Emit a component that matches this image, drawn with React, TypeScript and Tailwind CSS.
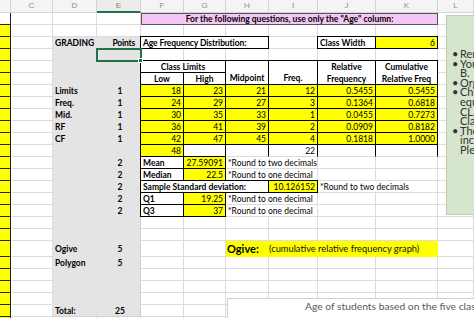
import React from "react";

const BK = "-ml-px -mt-px border border-black";
const LT = "border-r border-b border-[#dcdcdc]";

const HEAD = ["", "C", "D", "E", "F", "G", "H", "I", "J", "K", "L"];

const DATA = [
  ["18", "23", "21", "12", "0.5455", "0.5455"],
  ["24", "29", "27", "3", "0.1364", "0.6818"],
  ["30", "35", "33", "1", "0.0455", "0.7273"],
  ["36", "41", "39", "2", "0.0909", "0.8182"],
  ["42", "47", "45", "4", "0.1818", "1.0000"],
];

const GRAY: [string, string][] = [
  ["GRADING", "Points"],
  ["", "SEL"],
  ["", ""],
  ["", ""],
  ["Limits", "1"],
  ["Freq.", "1"],
  ["Mid.", "1"],
  ["RF", "1"],
  ["CF", "1"],
  ["", ""],
  ["", "2"],
  ["", "2"],
  ["", "2"],
  ["", "2"],
  ["", "2"],
  ["", ""],
  ["", ""],
  ["Ogive", "5"],
  ["Polygon", "5"],
  ["", ""],
  ["", ""],
  ["", ""],
  ["Total:", "25"],
];

const NOTES: [boolean, string][] = [
  [true, "Remember to label every graph."],
  [true, "You will use the data in column"],
  [false, "B."],
  [true, "Organize the data in a table."],
  [true, "Check that the class widths are"],
  [false, "equal and that the lower"],
  [false, "CL."],
  [false, "Class limits do not overlap."],
  [true, "The frequencies must add up"],
  [false, "include every value."],
  [false, "Please round as indicated."],
];

function Stat({ label, value, note }: { label: string; value: string; note: string }) {
  return (
    <>
      <div className={`${BK} bg-white font-bold flex items-center pl-[2px]`}>{label}</div>
      <div className={`${BK} bg-[#ffff00] flex items-center justify-end pr-[2px]`}>{value}</div>
      <div className={`col-span-2 ${LT} flex items-center pl-[2px] whitespace-nowrap`}>{note}</div>
      <div className={LT} />
      <div className={LT} />
    </>
  );
}

export default function App() {
  const blanks = Array.from({ length: 330 });
  return (
    <div className="relative w-[474px] h-[318px] overflow-hidden bg-white font-['Lato',sans-serif] text-[8.5px] leading-[12px] text-black">
      <div className="grid grid-cols-[11px_42px_44px_44px_43px_42px_43px_49px_58px_62px_36px] grid-rows-[13px_repeat(19,12px)_16px_repeat(7,12px)]">
        {HEAD.map((c, i) => (
          <div
            key={"h" + i}
            className={
              i === 3
                ? "bg-[#ececec] border-r border-[#d5d5d5] border-b-2 border-b-[#217346] flex items-center justify-center font-['Liberation_Sans',sans-serif] text-[8px] text-[#7d7d7d]"
                : "bg-[#f4f4f4] border-r border-b border-[#d5d5d5] flex items-center justify-center font-['Liberation_Sans',sans-serif] text-[8px] text-[#8f8f8f]"
            }
          >
            {c}
          </div>
        ))}
        {blanks.map((_, i) => (
          <div key={"b" + i} className={LT} />
        ))}

        {/* column B strip */}
        <div className="col-start-1 row-start-2 row-span-27 flex flex-col">
          <div className="h-[12px] shrink-0 bg-white border-r border-b border-[#222]" />
          {Array.from({ length: 26 }, (_, i) => (
            <div
              key={i}
              className={`${i + 2 === 20 ? "h-[16px]" : "h-[12px]"} shrink-0 bg-[#ffff00] border-r border-b border-[#222]`}
            />
          ))}
        </div>

        {/* grading area */}
        <div className="col-start-3 col-span-2 row-start-4 row-span-23 bg-[#e4e4e4] border-r border-b border-[#d0d0d0] grid grid-cols-[44px_44px] grid-rows-[repeat(17,12px)_16px_repeat(5,12px)]">
          {GRAY.map(([l, v], i) => (
            <React.Fragment key={i}>
              <div className="flex items-center pl-[2px] font-bold whitespace-nowrap">{l}</div>
              {v === "SEL" ? (
                <div className="relative -m-px border-2 border-[#217346]">
                  <div className="absolute -right-[3px] -bottom-[3px] w-[5px] h-[5px] bg-[#217346] border border-white" />
                </div>
              ) : v === "Points" ? (
                <div className="flex items-center justify-end pr-[6px] font-bold tracking-[-0.2px]">{v}</div>
              ) : (
                <div className="flex items-center justify-center pl-[2px] font-bold">{v}</div>
              )}
            </React.Fragment>
          ))}
        </div>

        {/* pink banner */}
        <div className="col-start-5 col-span-6 row-start-2 border border-[#555] bg-[#f6c6f6] font-bold flex items-center justify-center whitespace-nowrap">
          For the following questions, use only the "Age" column:
        </div>

        {/* row 3 boxes */}
        <div className={`col-start-5 col-span-3 row-start-4 ${BK} bg-white font-bold flex items-center pl-[2px] whitespace-nowrap tracking-[-0.1px]`}>
          Age Frequency Distribution:
        </div>
        <div className={`col-start-9 row-start-4 ${BK} bg-white font-bold flex items-center pl-[2px] whitespace-nowrap`}>
          Class Width
        </div>
        <div className={`col-start-10 row-start-4 ${BK} bg-[#ffff00] flex items-center justify-end pr-[2px]`}>6</div>

        {/* frequency table */}
        <div className="col-start-5 col-span-6 row-start-6 row-span-8 grid grid-cols-[43px_42px_43px_49px_58px_62px] grid-rows-[repeat(8,12px)]">
          <div className={`col-start-1 col-span-2 row-start-1 ${BK} bg-white font-bold flex items-center justify-center`}>Class Limits</div>
          <div className={`col-start-3 row-start-1 row-span-2 ${BK} bg-white font-bold flex items-end justify-center`}>Midpoint</div>
          <div className={`col-start-4 row-start-1 row-span-2 ${BK} bg-white font-bold flex items-end justify-center`}>Freq.</div>
          <div className={`col-start-5 row-start-1 row-span-2 ${BK} bg-white font-bold flex flex-col items-center justify-center`}>
            <span>Relative</span>
            <span>Frequency</span>
          </div>
          <div className={`col-start-6 row-start-1 row-span-2 ${BK} bg-white font-bold flex flex-col items-center justify-center`}>
            <span>Cumulative</span>
            <span>Relative Freq</span>
          </div>
          <div className={`col-start-1 row-start-2 ${BK} bg-white font-bold flex items-center justify-center`}>Low</div>
          <div className={`col-start-2 row-start-2 ${BK} bg-white font-bold flex items-center justify-center`}>High</div>
          {DATA.map((r, ri) =>
            r.map((v, ci) => (
              <div key={ri + "-" + ci} className={`${BK} bg-[#ffff00] flex items-center justify-end pr-[2px]`}>
                {v}
              </div>
            ))
          )}
          <div className={`${BK} bg-[#ffff00] flex items-center justify-end pr-[2px]`}>48</div>
          <div className="border-r border-b border-r-black border-b-[#dcdcdc]" />
          <div className="border-r border-b border-r-black border-b-[#dcdcdc]" />
          <div className="border-r border-b border-r-black border-b-[#dcdcdc] flex items-center justify-end pr-[2px]">22</div>
          <div className="border-r border-b border-r-black border-b-[#dcdcdc]" />
          <div className="border-r border-b border-r-black border-b-[#dcdcdc]" />
        </div>

        {/* statistics */}
        <div className="col-start-5 col-span-6 row-start-14 row-span-5 grid grid-cols-[43px_42px_43px_49px_58px_62px] grid-rows-[repeat(5,12px)]">
          <Stat label="Mean" value="27.59091" note="*Round to two decimals" />
          <Stat label="Median" value="22.5" note="*Round to one decimal" />
          <div className={`col-span-3 ${BK} bg-white font-bold flex items-center pl-[2px] whitespace-nowrap`}>
            Sample Standard deviation:
          </div>
          <div className={`${BK} bg-[#ffff00] flex items-center justify-end pr-[2px]`}>10.126152</div>
          <div className={`col-span-2 ${LT} flex items-center pl-[2px] whitespace-nowrap`}>*Round to two decimals</div>
          <Stat label="Q1" value="19.25" note="*Round to one decimal" />
          <Stat label="Q3" value="37" note="*Round to one decimal" />
        </div>

        {/* ogive */}
        <div className="col-start-7 col-span-4 row-start-21 bg-[#ffff00] flex items-center whitespace-nowrap">
          <span className="w-[43px] shrink-0 pl-[1px] text-[11px] font-bold">Ogive:</span>
          <span className="text-[9.3px] text-[#111]">(cumulative relative frequency graph)</span>
        </div>
      </div>

      {/* instruction text box */}
      <div className="absolute left-[446px] top-[15px] w-[80px] h-[200px] bg-[#d6e5ce] border border-[#bccdb2] pt-[33px] text-[11px] leading-[9.6px] text-[#333]">
        {NOTES.map(([b, t], i) => (
          <div key={i} className="flex whitespace-nowrap pl-[5px] h-[9.6px]">
            <span className="w-[8px] shrink-0">{b ? "•" : ""}</span>
            <span>{t}</span>
          </div>
        ))}
      </div>

      {/* chart */}
      <div className="absolute left-[227px] top-[298px] w-[320px] h-[60px] bg-white border border-[#d0d0d0]">
        <div className="pl-[77px] pt-[1px] text-[10.3px] leading-[12px] text-[#595959] whitespace-nowrap">
          Age of students based on the five classes
        </div>
      </div>
    </div>
  );
}
